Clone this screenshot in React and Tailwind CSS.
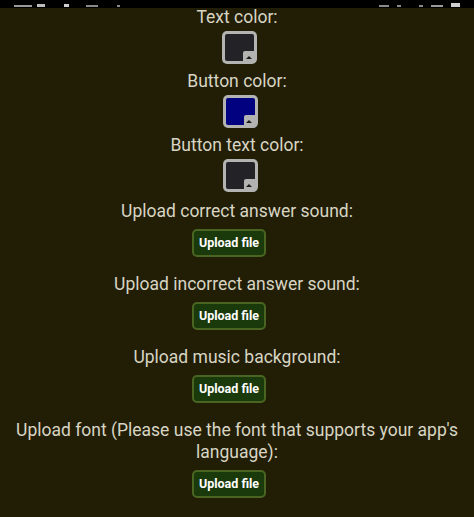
import React from 'react';

const colorFields = [
  { label: 'Text color:', color: '#232327' },
  { label: 'Button color:', color: '#020280' },
  { label: 'Button text color:', color: '#232327' },
];

const uploadFields = [
  'Upload correct answer sound:',
  'Upload incorrect answer sound:',
  'Upload music background:',
  "Upload font (Please use the font that supports your app's language):",
];

const Swatch = ({ color }) => (
  <div className="relative w-[35px] h-[33px] rounded-[5px] bg-[#b3b3b1] p-[3px]">
    <div className="w-full h-full rounded-[2px]" style={{ background: color }} />
    <div className="absolute right-[3px] bottom-[3px] w-[11px] h-[10px] bg-[#b3b3b1] rounded-tl-[2px] flex items-center justify-center">
      <div className="w-0 h-0 border-l-[3px] border-r-[3px] border-b-[3px] border-l-transparent border-r-transparent border-b-[#1a1a1a] mt-[2px]" />
    </div>
  </div>
);

const UploadButton = () => (
  <button className="h-[28px] w-[74px] rounded-[5px] bg-[#1b3a0b] border-2 border-[#4a6522] text-white text-[12.5px] font-bold leading-none">
    Upload file
  </button>
);

export default function App() {
  return (
    <div
      className="w-[474px] h-[517px] overflow-hidden bg-[#221e06] text-[#d8d5c4]"
      style={{ fontFamily: 'Roboto, "Noto Sans", sans-serif' }}
    >
      {/* status bar, mostly cut off */}
      <div className="h-[8px] bg-black flex items-end justify-between px-[14px]">
        <div className="flex items-end gap-[5px] pb-[1px]">
          <div className="w-[18px] h-[2px] bg-[#9a9a9a]" />
          <div className="w-[8px] h-[3px] bg-[#bdbdbd]" />
          <div className="w-[5px] h-[3px] bg-[#cfcfcf] ml-[14px]" />
          <div className="w-[12px] h-[2px] bg-[#8a8a8a] ml-[12px]" />
          <div className="w-[3px] h-[2px] bg-[#8a8a8a] ml-[14px]" />
        </div>
        <div className="flex items-end gap-[8px] pb-[1px]">
          <div className="w-[10px] h-[2px] bg-[#8a8a8a]" />
          <div className="w-[4px] h-[2px] bg-[#8a8a8a]" />
          <div className="w-[4px] h-[2px] bg-[#8a8a8a] ml-[10px]" />
          <div className="w-[12px] h-[2px] bg-[#9a9a9a]" />
          <div className="w-[9px] h-[4px] bg-[#d0d0d0]" />
        </div>
      </div>

      <div className="flex flex-col items-center">
        {colorFields.map((f, i) => (
          <div key={i} className="flex flex-col items-center pb-[8px]">
            <div className="text-[17.5px] leading-[20px] h-[20px] -mt-[1px]">{f.label}</div>
            <div className="mt-[4px] ml-[6px]">
              <Swatch color={f.color} />
            </div>
          </div>
        ))}
        {uploadFields.map((label, i) => (
          <div key={i} className="flex flex-col items-center pb-[16px] px-[8px]">
            <div className="text-[17.5px] leading-[22px] text-center">{label}</div>
            <div className="mt-[7px] mr-[16px]">
              <UploadButton />
            </div>
          </div>
        ))}
      </div>
    </div>
  );
}
